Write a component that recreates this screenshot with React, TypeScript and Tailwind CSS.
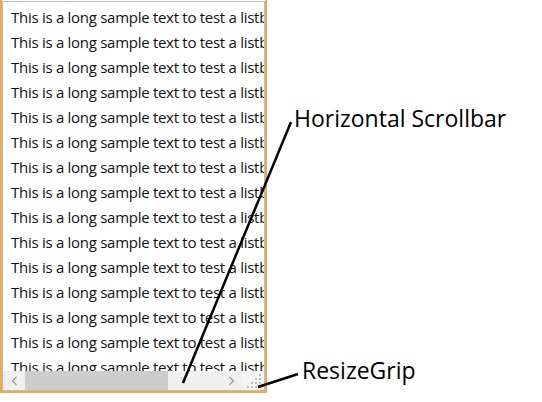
import type { ReactNode } from "react";

const rowText = "This is a long sample text to test a listbox with a horizontal scrollbar";

function Chevron({ dir }: { dir: "left" | "right" }) {
  return (
    <svg width="7" height="10" viewBox="0 0 7 10" className="shrink-0">
      <polyline
        points={dir === "left" ? "5.5,1 1.5,5 5.5,9" : "1.5,1 5.5,5 1.5,9"}
        fill="none"
        stroke="#9a9a9a"
        strokeWidth="1.2"
      />
    </svg>
  );
}

function ResizeGrip() {
  const dots: ReactNode[] = [];
  for (let row = 0; row < 4; row++) {
    for (let col = 3 - row; col < 4; col++) {
      dots.push(
        <rect
          key={`${row}-${col}`}
          x={col * 4}
          y={row * 4}
          width="2"
          height="2"
          fill="#b4bdcc"
        />,
      );
    }
  }
  return (
    <svg width="14" height="14" viewBox="0 0 14 14">
      {dots}
    </svg>
  );
}

export default function App() {
  return (
    <div
      className="relative h-[402px] w-[542px] overflow-hidden bg-white text-black"
      style={{ fontFamily: '"Open Sans", "Noto Sans", sans-serif' }}
    >
      {/* listbox with focus border */}
      <div className="h-[393px] w-[267px] border-x-2 border-b-2 border-[#f5a649] pt-px">
        <div className="flex h-full flex-col border border-[#bdbdbd] bg-white">
          <div className="relative min-h-0 flex-1 overflow-hidden">
            <div className="pt-[3px]">
              {Array.from({ length: 15 }, (_, i) => (
                <div
                  key={i}
                  className="h-[25px] whitespace-nowrap pl-[8px] text-[15px] leading-[25px] tracking-[-0.28px] text-[#111]"
                >
                  {rowText}
                </div>
              ))}
            </div>
          </div>

          {/* horizontal scrollbar */}
          <div className="flex h-[19px] shrink-0 bg-[#f0f0f0]">
            <div className="flex w-[21px] items-center justify-center pl-px">
              <Chevron dir="left" />
            </div>
            <div className="flex flex-1 items-stretch">
              <div className="ml-px w-[143px] bg-[#cdcdcd]" />
            </div>
            <div className="flex w-[22px] items-center justify-center">
              <Chevron dir="right" />
            </div>
            <div className="flex w-[22px] items-end justify-end bg-[#f4f4f4] pb-[2px] pr-[3px]">
              <ResizeGrip />
            </div>
          </div>
        </div>
      </div>

      {/* annotations */}
      <svg className="pointer-events-none absolute left-0 top-0" width="542" height="402">
        <line x1="291" y1="122" x2="183" y2="383" stroke="#000" strokeWidth="2.5" />
        <line x1="258" y1="387" x2="298" y2="374" stroke="#000" strokeWidth="2.5" />
      </svg>
      <div className="absolute left-[294px] top-[103px] whitespace-nowrap text-[23px] leading-[30px]">
        Horizontal Scrollbar
      </div>
      <div className="absolute left-[302px] top-[355px] whitespace-nowrap text-[23px] leading-[30px]">
        ResizeGrip
      </div>
    </div>
  );
}
